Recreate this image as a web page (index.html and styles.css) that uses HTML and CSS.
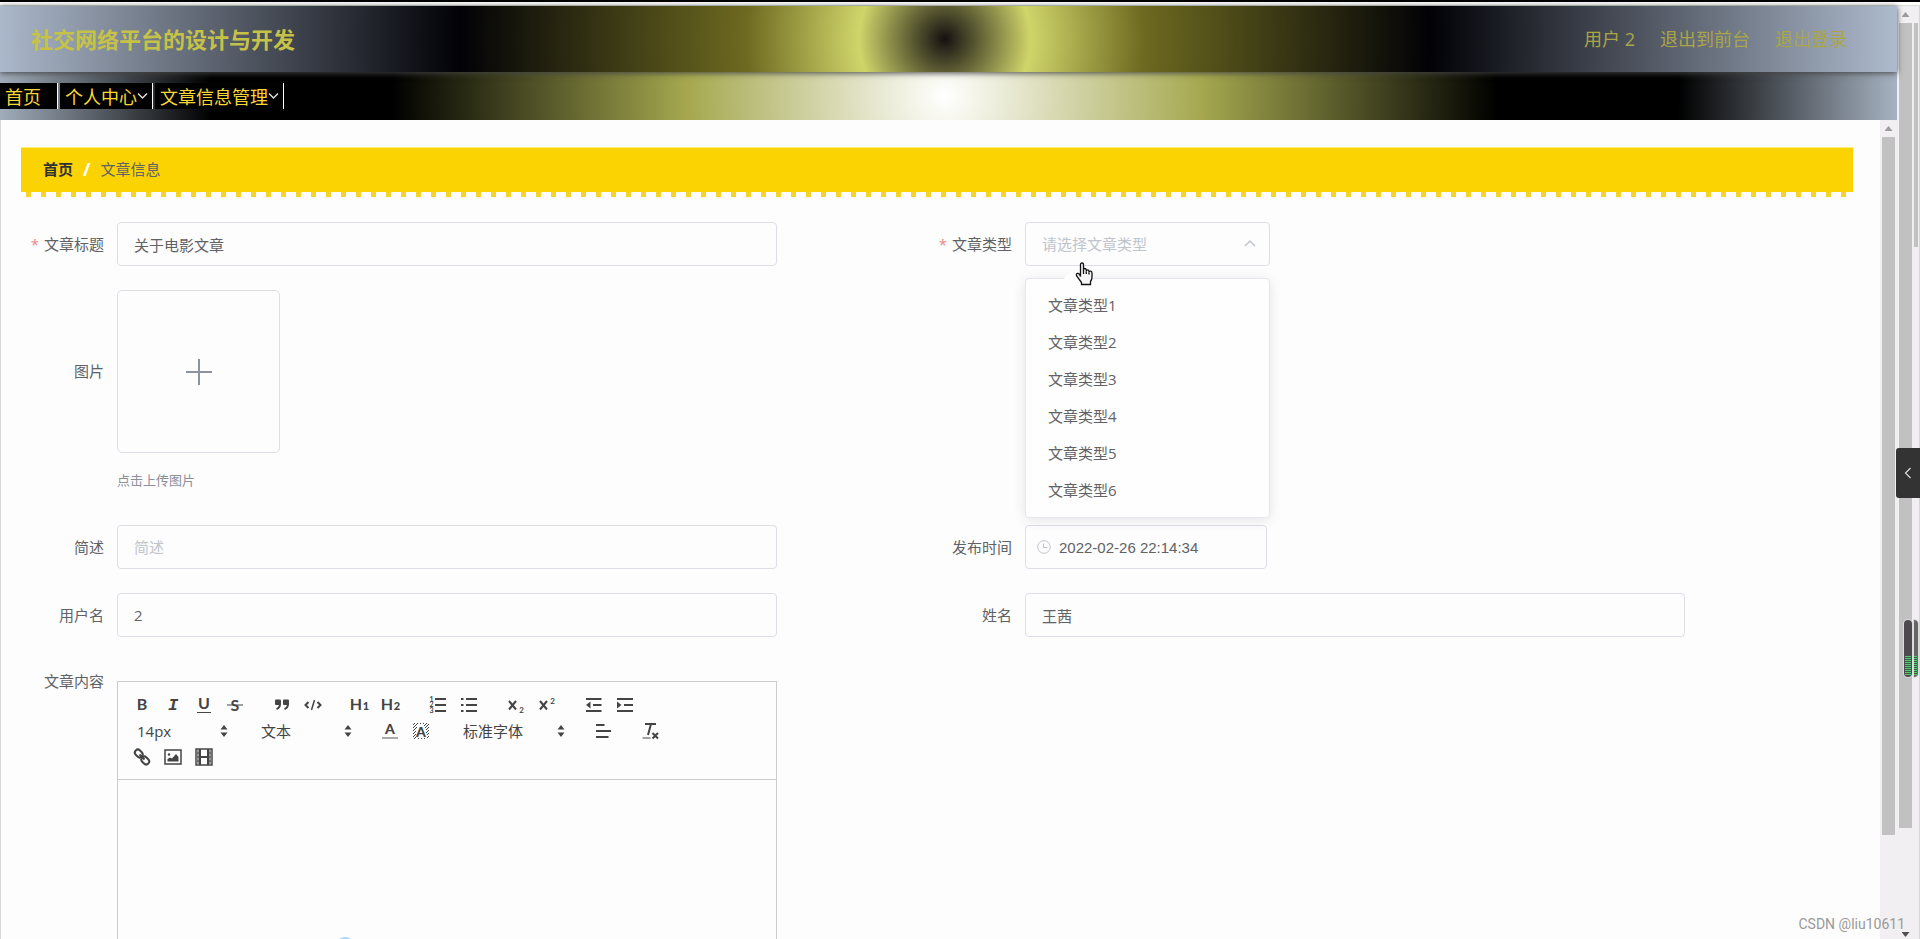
FILE: index.html
```html
<!DOCTYPE html>
<html lang="zh-CN">
<head>
    <meta charset="UTF-8">
    <meta name="viewport" content="width=device-width, initial-scale=1.0">
    <title>社交网络平台的设计与开发</title>
    <link rel="stylesheet" href="styles.css">
</head>
<body>
    <div class="top-strip"></div>
    <div class="window">
        <div class="page">
            <header class="header">
                <h1>社交网络平台的设计与开发</h1>
                <div class="user-links">
                    <span>用户 2</span>
                    <a href="#">退出到前台</a>
                    <a href="#">退出登录</a>
                </div>
            </header>
            <nav class="nav">
                <a class="nav-home" href="#">首页</a>
                <a href="#">个人中心<svg width="11" height="8" viewBox="0 0 11 8"><path d="M1 1.5L5.5 6L10 1.5"/></svg></a>
                <a href="#">文章信息管理<svg width="11" height="8" viewBox="0 0 11 8"><path d="M1 1.5L5.5 6L10 1.5"/></svg></a>
            </nav>
            <div class="content">
                <main class="main">
                    <div class="breadcrumb">
                        <a href="#">首页</a>
                        <b>/</b>
                        <span>文章信息</span>
                    </div>
                    <form class="form">
                        <div class="row">
                            <div class="form-item">
                                <label class="required" for="title">文章标题</label>
                                <input type="text" id="title" value="关于电影文章">
                            </div>
                            <div class="form-item">
                                <label class="required" for="type">文章类型</label>
                                <div class="select-box">
                                    <select id="type">
                                        <option value="">请选择文章类型</option>
                                        <option>文章类型1</option>
                                        <option>文章类型2</option>
                                        <option>文章类型3</option>
                                        <option>文章类型4</option>
                                        <option>文章类型5</option>
                                        <option>文章类型6</option>
                                    </select>
                                    <svg class="caret" width="12" height="8" viewBox="0 0 12 8"><path d="M1 7L6 2L11 7"/></svg>
                                    <ul class="dropdown">
                                        <li>文章类型1</li>
                                        <li>文章类型2</li>
                                        <li>文章类型3</li>
                                        <li>文章类型4</li>
                                        <li>文章类型5</li>
                                        <li>文章类型6</li>
                                    </ul>
                                    <svg class="pointer" width="20" height="24" viewBox="0 0 20 24">
                                        <path d="M5.5 14.500V2.500Q5.500 1 7 1T8.500 2.500V9V7.500Q8.500 6.500 9.800 6.500T11.300 8V9.500Q11.300 7.800 12.600 7.800T14 9.300V10.500Q14 9 15.500 9.200T17 11V15Q17 17.500 15.500 19.500V22.500H6.500V20.500L2 14.500Q0.800 12.500 2 11.600T4.500 12.500Z"/>
                                        <path d="M8.500 9V12M11.300 9.500V12M14 10.500V12.500"/>
                                    </svg>
                                </div>
                            </div>
                        </div>
                        <div class="row">
                            <div class="form-item">
                                <label class="picture-label" for="upload">图片</label>
                                <div>
                                    <button type="button" class="upload" id="upload" aria-label="点击上传图片">
                                        <svg width="26" height="26" viewBox="0 0 26 26"><path d="M13 0V26M0 13H26"/></svg>
                                    </button>
                                    <div class="tip">点击上传图片</div>
                                </div>
                            </div>
                        </div>
                        <div class="row">
                            <div class="form-item">
                                <label for="summary">简述</label>
                                <input type="text" id="summary" placeholder="简述">
                            </div>
                            <div class="form-item">
                                <label for="date">发布时间</label>
                                <div class="date-box">
                                    <svg width="14" height="14" viewBox="0 0 14 14"><circle cx="7" cy="7" r="6.300"/><path d="M6.500 3.500V7.500H10.500"/></svg>
                                    <input type="text" id="date" value="2022-02-26 22:14:34">
                                </div>
                            </div>
                        </div>
                        <div class="row">
                            <div class="form-item">
                                <label for="username">用户名</label>
                                <input type="text" id="username" value="2">
                            </div>
                            <div class="form-item">
                                <label for="realname">姓名</label>
                                <input type="text" id="realname" value="王茜">
                            </div>
                        </div>
                        <div class="row">
                            <div class="form-item">
                                <label class="editor-label" for="editor-text">文章内容</label>
                                <div class="editor">
                                    <div class="toolbar">
                                        <span class="formats">
                                            <button type="button" aria-label="bold"><svg viewBox="0 0 18 18"><text x="9" y="14" font-size="16">B</text></svg></button>
                                            <button type="button" aria-label="italic"><svg viewBox="0 0 18 18"><text class="slant" x="9" y="14" font-size="17">I</text></svg></button>
                                            <button type="button" aria-label="underline"><svg viewBox="0 0 18 18"><text class="thin" x="9" y="12.500" font-size="16">U</text><path class="thin" d="M2 16.500H16"/></svg></button>
                                            <button type="button" aria-label="strike"><svg viewBox="0 0 18 18"><text class="thin" x="9" y="14.500" font-size="16">S</text><path class="thin" d="M1 9H17"/></svg></button>
                                        </span>
                                        <span class="formats">
                                            <button type="button" aria-label="blockquote"><svg viewBox="0 0 18 18"><rect class="fill" x="2" y="3.500" width="6" height="5.500" rx="1"/><rect class="fill" x="10" y="3.500" width="6" height="5.500" rx="1"/><path d="M7 7.500Q7 12 3.500 13M15 7.500Q15 12 11.500 13"/></svg></button>
                                            <button type="button" aria-label="code"><svg viewBox="0 0 18 18"><path d="M4.500 6L1.500 9L4.500 12M13.500 6L16.500 9L13.500 12"/><path class="slash" d="M10.500 4L7.500 14"/></svg></button>
                                        </span>
                                        <span class="formats">
                                            <button type="button" aria-label="header 1"><svg viewBox="0 0 18 18"><text x="5" y="14" font-size="16">H</text><text class="heavy" x="15" y="14" font-size="11">1</text></svg></button>
                                            <button type="button" aria-label="header 2"><svg viewBox="0 0 18 18"><text x="5" y="14" font-size="16">H</text><text class="heavy" x="15" y="14" font-size="11">2</text></svg></button>
                                        </span>
                                        <span class="formats">
                                            <button type="button" aria-label="ordered list"><svg viewBox="0 0 18 18"><path d="M6 3H17M6 9H17M6 15H17"/><text class="tiny" x="2.500" y="5.500" font-size="7">1</text><text class="tiny" x="2.500" y="11" font-size="7">2</text><text class="tiny" x="2.500" y="17" font-size="7">3</text></svg></button>
                                            <button type="button" aria-label="bullet list"><svg viewBox="0 0 18 18"><path d="M6 3H17M6 9H17M6 15H17M1 3H3.500M1 9H3.500M1 15H3.500"/></svg></button>
                                        </span>
                                        <span class="formats">
                                            <button type="button" aria-label="subscript"><svg viewBox="0 0 18 18"><path d="M2 5L9 13.500M9 5L2 13.500"/><text x="14.500" y="17" font-size="8">2</text></svg></button>
                                            <button type="button" aria-label="superscript"><svg viewBox="0 0 18 18"><path d="M2 5L9 13.500M9 5L2 13.500"/><text x="14.500" y="7.500" font-size="8">2</text></svg></button>
                                        </span>
                                        <span class="formats">
                                            <button type="button" aria-label="outdent"><svg viewBox="0 0 18 18"><path d="M1 3H16.500M8 9H16.500M1 15H16.500"/><path class="fill" d="M5.500 5.500V12.500L1 9Z"/></svg></button>
                                            <button type="button" aria-label="indent"><svg viewBox="0 0 18 18"><path d="M1 3H17M8 9H17M1 15H17"/><path class="fill" d="M1 5.500V12.500L5.500 9Z"/></svg></button>
                                        </span>
                                        <span class="formats picker">
                                            <select aria-label="size"><option>14px</option></select>
                                            <svg viewBox="0 0 18 18"><path class="fill" d="M5.500 7.500L9 3L12.500 7.500ZM5.500 10.500L9 15L12.500 10.500Z"/></svg>
                                        </span>
                                        <span class="formats picker">
                                            <select aria-label="header"><option>文本</option></select>
                                            <svg viewBox="0 0 18 18"><path class="fill" d="M5.500 7.500L9 3L12.500 7.500ZM5.500 10.500L9 15L12.500 10.500Z"/></svg>
                                        </span>
                                        <span class="formats">
                                            <button type="button" aria-label="color"><svg viewBox="0 0 18 18"><text class="heavy" x="9" y="11.500" font-size="14">A</text><path class="pale" d="M1 16H17"/></svg></button>
                                            <button type="button" aria-label="background"><svg viewBox="0 0 18 18"><path class="hatch" d="M1 3L3 1M1 6L6 1M1 9L5 5M1 12L4 9M1 15L4 12M2 17L4 15M8 2L9 1M11 2L12 1M12 4L15 1M13 6L17 2M14 8L17 5M14 11L17 8M15 13L17 11M15 16L17 14M6 17L7 16M9 17L10 16M12 17L13 16"/><text class="heavy" x="9" y="14.500" font-size="14">A</text></svg></button>
                                        </span>
                                        <span class="formats picker wide">
                                            <select aria-label="font"><option>标准字体</option></select>
                                            <svg viewBox="0 0 18 18"><path class="fill" d="M5.500 7.500L9 3L12.500 7.500ZM5.500 10.500L9 15L12.500 10.500Z"/></svg>
                                        </span>
                                        <span class="formats">
                                            <button type="button" aria-label="align"><svg viewBox="0 0 18 18"><path d="M2 3H10.500M2 9H17M2 15H14.500"/></svg></button>
                                        </span>
                                        <span class="formats">
                                            <button type="button" aria-label="clean"><svg viewBox="0 0 18 18"><path d="M4 2H15M10 2L7 13M11.500 11L17 16.500M17 11L11.500 16.500"/><path class="thin" d="M1.500 16H9.500"/></svg></button>
                                        </span>
                                        <span class="formats">
                                            <button type="button" aria-label="link"><svg viewBox="0 0 18 18"><rect x="1.500" y="2.500" width="8.500" height="6" rx="3" transform="rotate(45 5.750 5.500)"/><rect x="8" y="9.500" width="8.500" height="6" rx="3" transform="rotate(45 12.250 12.500)"/><path d="M6.500 6.500L11.500 11.500"/></svg></button>
                                            <button type="button" aria-label="image"><svg viewBox="0 0 18 18"><rect class="frame" x="1" y="2" width="16" height="14"/><circle class="fill" cx="5" cy="6.500" r="1.200"/><path class="fill" d="M3.500 13.500V11L6 9.500L8 10.500L12 6L14.500 9V13.500Z"/></svg></button>
                                            <button type="button" aria-label="video"><svg viewBox="0 0 18 18"><path class="rail" d="M3 2V16M15 2V16"/><rect class="frame" x="1" y="1" width="16" height="16"/><path d="M5 1V17M13 1V17M5 9H13"/><path class="thin" d="M2 5H5M2 9H5M2 13H5M13 5H16M13 9H16M13 13H16"/></svg></button>
                                        </span>
                                    </div>
                                    <textarea id="editor-text"></textarea>
                                </div>
                            </div>
                        </div>
                    </form>
                    <div class="float-dot"></div>
                </main>
                <div class="scrollbar inner-bar"><i class="arrow-up"></i><div class="thumb"></div></div>
            </div>
        </div>
        <div class="scrollbar outer-bar"><i class="arrow-up"></i><div class="thumb"></div><i class="arrow-down"></i></div>
        <div class="scrollbar edge-bar"><div class="thumb"></div></div>
    </div>

    <button type="button" class="side-tab" aria-label="展开"><svg width="8" height="12" viewBox="0 0 8 12"><path d="M6.500 1L1.500 6L6.500 11"/></svg></button>
    <div class="meter"><span></span><span></span></div>
    <div class="watermark">CSDN @liu10611</div>
</body>
</html>
```
FILE: styles.css
```css
* {
    box-sizing: border-box;
}
body {
    margin: 0;
    height: 100vh;
    display: flex;
    flex-direction: column;
    overflow: hidden;
    background: #fdfdfd;
    color: #606266;
    font-family: "Open Sans", "Noto Sans CJK SC", sans-serif;
    font-size: 15px;
}
a {
    color: inherit;
    text-decoration: none;
}
svg {
    fill: none;
    flex: none;
}
input,
select,
button,
textarea {
    font: inherit;
    color: inherit;
}
.top-strip {
    height: 6px;
    flex: none;
    border-top: 2px solid #000;
    border-bottom: 1px solid #d5dcd2;
    background: #fff;
}
.window {
    flex: 1;
    min-height: 0;
    display: flex;
}
.page {
    flex: 1;
    min-width: 0;
    display: flex;
    flex-direction: column;
}

/* header */
.header {
    position: relative;
    flex: none;
    height: 66px;
    padding: 0 50px 0 31px;
    display: flex;
    align-items: center;
    justify-content: space-between;
    background: radial-gradient(circle at 49.8%, #151111 0%, #d0d56a 9%, #6d6920 21%, #010106 51%, #aebbce 100%);
    box-shadow: 0 1px 6px #444;
}
.header h1 {
    margin: 0;
    font-size: 22px;
    line-height: 32px;
    color: #c6c248;
}
.user-links {
    display: flex;
    gap: 25px;
    font-size: 18px;
    line-height: 26px;
    color: #aaa648;
}

/* menu */
.nav {
    flex: none;
    height: 48px;
    display: flex;
    align-items: center;
    gap: 2px;
    background: radial-gradient(circle at 49.8%, #fff 0%, #a5a84f 27%, #000 58%, #000 77%, #a7b3c2 100%);
}
.nav a {
    height: 26px;
    padding: 0 4px 0 5px;
    display: flex;
    align-items: center;
    background: #020203;
    border-right: 1px solid #fff;
    color: #f9d835;
    font-size: 18px;
}
.nav .nav-home {
    padding-right: 16px;
}
.nav svg {
    stroke: #ddd;
    stroke-width: 1.5;
}

/* content */
.content {
    flex: 1;
    min-height: 0;
    display: flex;
}
.main {
    position: relative;
    flex: 1;
    min-width: 0;
    overflow: hidden;
    padding: 27px 27px 0 20px;
    border-left: 1px solid #d9d9d9;
}
.breadcrumb {
    position: relative;
    height: 45px;
    padding: 0 22px 3px;
    display: flex;
    align-items: center;
    gap: 10px;
    background: #fbd303;
    border-top: 1px solid #fcec7a;
}
.breadcrumb::after {
    content: "";
    position: absolute;
    left: 5px;
    right: 4px;
    top: 100%;
    height: 5px;
    background: repeating-linear-gradient(90deg, #f5d32c 0, #f5d32c 5px, transparent 5px, transparent 15px);
}
.breadcrumb a {
    color: #303133;
    font-weight: bold;
}
.breadcrumb b {
    color: #fff;
    font-size: 18px;
}
.form {
    padding: 30px 8px 0;
}
.row {
    display: flex;
    margin-bottom: 24px;
}
.form-item {
    width: 50%;
    display: flex;
}
.form-item label {
    width: 88px;
    flex: none;
    padding-right: 13px;
    line-height: 44px;
    text-align: right;
}
.form-item label.picture-label {
    line-height: 163px;
}
.form-item label.editor-label {
    line-height: 40px;
}
.required::before {
    content: "*";
    margin-right: 5px;
    color: #e8878a;
}
.form-item input {
    width: 660px;
    max-width: 100%;
    height: 44px;
    padding: 0 16px;
    background: #fdfdfd;
    border: 1px solid #dcdfe6;
    border-radius: 4px;
    outline: none;
}
.form-item input::placeholder {
    color: #c0c4cc;
}
.select-box {
    position: relative;
    width: 245px;
}
.select-box select {
    width: 100%;
    height: 44px;
    padding: 0 16px;
    appearance: none;
    background: #fdfdfd;
    border: 1px solid #dcdfe6;
    border-radius: 4px;
    color: #c0c4cc;
}
.caret {
    position: absolute;
    right: 14px;
    top: 17px;
    stroke: #c0c4cc;
    stroke-width: 1.5;
}
.dropdown {
    position: absolute;
    z-index: 2;
    top: 56px;
    left: 0;
    width: 100%;
    margin: 0;
    padding: 8px 0;
    list-style: none;
    background: #fefefe;
    border: 1px solid #e4e7ed;
    border-radius: 4px;
    box-shadow: 0 2px 13px rgba(0, 0, 0, 0.1);
}
.dropdown::before {
    content: "";
    position: absolute;
    left: 40px;
    top: -6px;
    width: 10px;
    height: 10px;
    background: #fefefe;
    transform: rotate(45deg);
}
.dropdown li {
    height: 37px;
    padding: 0 22px;
    line-height: 37px;
}
.pointer {
    position: absolute;
    z-index: 3;
    left: 50px;
    top: 40px;
    fill: #f5f5f5;
    stroke: #111;
    stroke-width: 1.3;
}
.upload {
    width: 163px;
    height: 163px;
    padding: 0;
    display: flex;
    align-items: center;
    justify-content: center;
    background: #fdfdfd;
    border: 1px solid #dcdfe6;
    border-radius: 5px;
}
.upload svg {
    stroke: #8c939d;
    stroke-width: 2;
}
.tip {
    padding: 7px 0 1px;
    font-size: 13px;
    line-height: 40px;
    color: #8a8f9c;
}
.date-box {
    position: relative;
    width: 242px;
}
.date-box svg {
    position: absolute;
    left: 12px;
    top: 15px;
    stroke: #c0c4cc;
}
.form-item .date-box input {
    width: 100%;
    padding-left: 33px;
    font-family: "Liberation Sans", sans-serif;
}

/* editor */
.editor {
    width: 660px;
    max-width: 100%;
    height: 400px;
    margin-top: 20px;
    display: flex;
    flex-direction: column;
    border: 1px solid #ccc;
    color: #444;
}
.toolbar {
    padding: 10px 9px 9px 8px;
    display: flex;
    flex-wrap: wrap;
    border-bottom: 1px solid #ccc;
}
.formats {
    height: 26px;
    margin-right: 16px;
    display: flex;
    align-items: center;
}
.formats button {
    width: 31px;
    height: 26px;
    padding: 0;
    display: flex;
    align-items: center;
    justify-content: center;
    background: none;
    border: none;
}
.formats svg {
    width: 18px;
    height: 18px;
    stroke: #444;
    stroke-width: 2;
    overflow: visible;
}
.formats text {
    fill: #444;
    stroke: none;
    text-anchor: middle;
    font-family: Lato, sans-serif;
    font-weight: bold;
}
.formats .slant {
    font-family: "Liberation Mono", monospace;
    font-style: italic;
}
.formats text.heavy {
    font-weight: 900;
}
.formats path.thin {
    stroke-width: 1;
}
.formats path.slash {
    stroke-width: 1.5;
}
.formats .fill {
    fill: #444;
    stroke: none;
}
.formats .frame {
    stroke-width: 1.5;
}
.formats .pale {
    stroke: #aaa;
}
.formats .hatch {
    stroke-width: 1;
}
.formats .rail {
    stroke: #999;
}
.picker {
    position: relative;
    width: 108px;
}
.picker.wide {
    width: 119px;
}
.picker select {
    width: 100%;
    height: 26px;
    padding: 0 0 0 11px;
    appearance: none;
    background: none;
    border: none;
}
.picker svg {
    position: absolute;
    right: 1px;
    top: 4px;
    pointer-events: none;
}
.editor textarea {
    flex: 1;
    padding: 13px 17px;
    background: none;
    border: none;
    outline: none;
    resize: none;
}
.float-dot {
    position: absolute;
    left: 334px;
    bottom: -18px;
    width: 20px;
    height: 20px;
    border-radius: 50%;
    background: #a5d8fb;
}

/* scrollbars */
.scrollbar {
    width: 17px;
    flex: none;
    display: flex;
    flex-direction: column;
    align-items: center;
    background: #f1eff2;
}
.scrollbar .thumb {
    width: 13px;
    flex: 1;
    background: #c1c1c1;
}
.inner-bar .thumb {
    margin-bottom: 104px;
}
.outer-bar .thumb {
    margin-bottom: 98px;
}
.arrow-up,
.arrow-down {
    width: 8px;
    height: 5px;
    margin: 6px 0;
    background: #9b9b9b;
    clip-path: polygon(50% 0, 100% 100%, 0 100%);
}
.arrow-down {
    background: #505050;
    clip-path: polygon(0 0, 100% 0, 50% 100%);
    margin-bottom: 2px;
}
.edge-bar {
    width: 6px;
    padding-top: 17px;
    align-items: flex-start;
    border-right: 1px solid #d5d5d5;
}
.edge-bar .thumb {
    flex: none;
    width: 4px;
    height: 24.5%;
}

/* floating things on the right edge */
.side-tab {
    position: absolute;
    right: 0;
    top: 448px;
    width: 24px;
    height: 50px;
    padding: 0;
    background: #333;
    border: none;
    border-radius: 3px 0 0 3px;
}
.side-tab svg {
    stroke: #ddd;
    stroke-width: 1.2;
}
.meter {
    position: absolute;
    right: 2px;
    top: 620px;
    display: flex;
    gap: 2px;
}
.meter span {
    width: 8px;
    height: 57px;
    padding: 36px 1px 1px;
    border-radius: 4px;
    background: #4d4a4d;
    box-shadow: 0 0 0 1px #ddd;
}
.meter span + span {
    width: 4px;
    padding: 36px 1px 1px 0;
    border-radius: 0 4px 4px 0;
    background: #666;
}
.meter span::before {
    content: "";
    display: block;
    height: 19px;
    background: repeating-linear-gradient(#55c777 0, #55c777 1px, #3a5a45 1px, #3a5a45 2px);
}
.watermark {
    position: absolute;
    right: 15px;
    bottom: 4px;
    font-family: Roboto, sans-serif;
    font-size: 14px;
    line-height: 22px;
    color: #999;
}
```
